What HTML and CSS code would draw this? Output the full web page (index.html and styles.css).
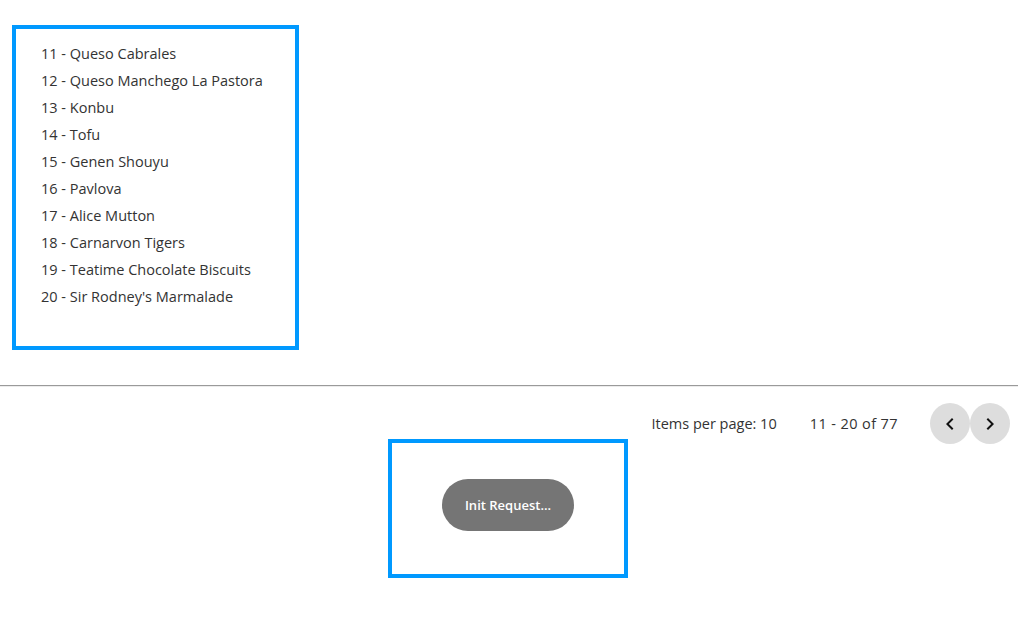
FILE: index.html
```html
<!DOCTYPE html>
<html lang="en">
<head>
  <meta charset="UTF-8">
  <title>Products</title>
  <link rel="stylesheet" href="styles.css">
</head>
<body>

  <div class="list-box">
    <ul class="product-list">
      <li>11 - Queso Cabrales</li>
      <li>12 - Queso Manchego La Pastora</li>
      <li>13 - Konbu</li>
      <li>14 - Tofu</li>
      <li>15 - Genen Shouyu</li>
      <li>16 - Pavlova</li>
      <li>17 - Alice Mutton</li>
      <li>18 - Carnarvon Tigers</li>
      <li>19 - Teatime Chocolate Biscuits</li>
      <li>20 - Sir Rodney's Marmalade</li>
    </ul>
  </div>

  <hr class="divider">

  <div class="paginator">
    <span class="page-size">Items per page: 10</span>
    <span class="range">11 - 20 of 77</span>
    <div class="nav-buttons">
      <button class="nav-btn" aria-label="Previous page">
        <svg viewBox="0 0 24 24" width="24" height="24"><path d="M15.41 7.41L14 6l-6 6 6 6 1.41-1.41L10.83 12z"/></svg>
      </button>
      <button class="nav-btn" aria-label="Next page">
        <svg viewBox="0 0 24 24" width="24" height="24"><path d="M10 6L8.59 7.41 13.17 12l-4.58 4.59L10 18l6-6z"/></svg>
      </button>
    </div>
  </div>

  <div class="request-box">
    <button class="request-btn">Init Request...</button>
  </div>

</body>
</html>
```

FILE: styles.css
```css
body {
  font-family: 'Open Sans', 'Noto Sans', sans-serif;
  margin: 0;
  padding: 0;
  background-color: white;
  color: #333;
}

.list-box {
  box-sizing: border-box;
  width: 287px;
  height: 325px;
  margin: 25px 0 0 12px;
  border: 4px solid #0099ff;
}

.product-list {
  list-style: none;
  margin: 0;
  padding: 11px 0 0 25px;
  font-size: 14.5px;
  line-height: 27px;
}

.divider {
  margin: 35px 0 0 0;
  border: none;
  border-top: 1px solid #9a9a9a;
  border-bottom: 1px solid #ececec;
  height: 0;
}

.paginator {
  display: flex;
  justify-content: flex-end;
  align-items: center;
  height: 41px;
  margin-top: 16px;
  padding-right: 8px;
  font-size: 14.5px;
}

.page-size {
  margin-right: 33px;
}

.range {
  margin-right: 32px;
  letter-spacing: 0.4px;
}

.nav-buttons {
  display: flex;
}

.nav-btn {
  width: 40px;
  height: 41px;
  border: none;
  border-radius: 50%;
  background-color: #dddddd;
  padding: 0;
  display: flex;
  align-items: center;
  justify-content: center;
}

.nav-btn svg {
  fill: #111;
}

.request-box {
  box-sizing: border-box;
  width: 240px;
  height: 139px;
  margin: -5px 0 0 388px;
  border: 4px solid #0099ff;
  display: flex;
  align-items: center;
  justify-content: center;
}

.request-btn {
  width: 132px;
  height: 52px;
  border: none;
  border-radius: 26px;
  background-color: #757575;
  color: white;
  font-family: 'Open Sans', 'Noto Sans', sans-serif;
  font-size: 13px;
  font-weight: 600;
  margin-bottom: 7px;
}
```
